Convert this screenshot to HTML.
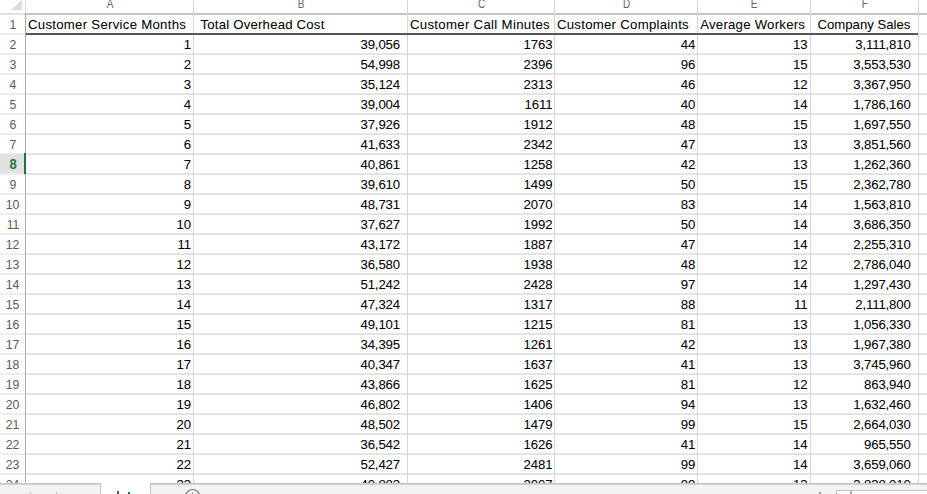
<!DOCTYPE html>
<html><head><meta charset="utf-8"><style>
*{margin:0;padding:0;box-sizing:border-box}
html,body{width:927px;height:494px;overflow:hidden;background:#fff}
body{position:relative;font-family:"Liberation Sans",sans-serif}
.l{position:absolute}
.t{position:absolute;white-space:nowrap;line-height:20px;height:20px;font-size:13.2px;color:#000;-webkit-text-stroke:0.05px #000}
.r{text-align:right}
.rh{position:absolute;white-space:nowrap;line-height:20px;height:20px;font-size:13.6px;color:#5a5a5a;text-align:center;width:25px;left:0}
.ch{position:absolute;white-space:nowrap;line-height:14px;font-size:12.5px;color:#666;text-align:center}
</style></head>
<body>
<svg class="l" style="left:0;top:0" width="25" height="14"><polygon points="11,10 22,10 22,0" fill="#dcdcdc"/></svg>
<div class="ch" style="left:26px;top:-2.9px;width:168px"><span style="display:inline-block;transform:scaleX(0.8)">A</span></div>
<div class="ch" style="left:194px;top:-2.9px;width:214px"><span style="display:inline-block;transform:scaleX(0.8)">B</span></div>
<div class="ch" style="left:408px;top:-2.9px;width:147px"><span style="display:inline-block;transform:scaleX(0.8)">C</span></div>
<div class="ch" style="left:555px;top:-2.9px;width:143px"><span style="display:inline-block;transform:scaleX(0.8)">D</span></div>
<div class="ch" style="left:698px;top:-2.9px;width:113px"><span style="display:inline-block;transform:scaleX(0.8)">E</span></div>
<div class="ch" style="left:811px;top:-2.9px;width:108px"><span style="display:inline-block;transform:scaleX(0.8)">F</span></div>
<div class="l" style="left:26px;top:53px;width:901px;height:1px;background:#e5e5e5"></div>
<div class="l" style="left:26px;top:54px;width:901px;height:1px;background:#e1e1e1"></div>
<div class="l" style="left:26px;top:73px;width:901px;height:1px;background:#e5e5e5"></div>
<div class="l" style="left:26px;top:74px;width:901px;height:1px;background:#e1e1e1"></div>
<div class="l" style="left:26px;top:93px;width:901px;height:1px;background:#e5e5e5"></div>
<div class="l" style="left:26px;top:94px;width:901px;height:1px;background:#e1e1e1"></div>
<div class="l" style="left:26px;top:113px;width:901px;height:1px;background:#e5e5e5"></div>
<div class="l" style="left:26px;top:114px;width:901px;height:1px;background:#e1e1e1"></div>
<div class="l" style="left:26px;top:133px;width:901px;height:1px;background:#e5e5e5"></div>
<div class="l" style="left:26px;top:134px;width:901px;height:1px;background:#e1e1e1"></div>
<div class="l" style="left:26px;top:153px;width:901px;height:1px;background:#e5e5e5"></div>
<div class="l" style="left:26px;top:154px;width:901px;height:1px;background:#e1e1e1"></div>
<div class="l" style="left:26px;top:173px;width:901px;height:1px;background:#e5e5e5"></div>
<div class="l" style="left:26px;top:174px;width:901px;height:1px;background:#e1e1e1"></div>
<div class="l" style="left:26px;top:193px;width:901px;height:1px;background:#e5e5e5"></div>
<div class="l" style="left:26px;top:194px;width:901px;height:1px;background:#e1e1e1"></div>
<div class="l" style="left:26px;top:213px;width:901px;height:1px;background:#e5e5e5"></div>
<div class="l" style="left:26px;top:214px;width:901px;height:1px;background:#e1e1e1"></div>
<div class="l" style="left:26px;top:233px;width:901px;height:1px;background:#e5e5e5"></div>
<div class="l" style="left:26px;top:234px;width:901px;height:1px;background:#e1e1e1"></div>
<div class="l" style="left:26px;top:253px;width:901px;height:1px;background:#e5e5e5"></div>
<div class="l" style="left:26px;top:254px;width:901px;height:1px;background:#e1e1e1"></div>
<div class="l" style="left:26px;top:273px;width:901px;height:1px;background:#e5e5e5"></div>
<div class="l" style="left:26px;top:274px;width:901px;height:1px;background:#e1e1e1"></div>
<div class="l" style="left:26px;top:293px;width:901px;height:1px;background:#e5e5e5"></div>
<div class="l" style="left:26px;top:294px;width:901px;height:1px;background:#e1e1e1"></div>
<div class="l" style="left:26px;top:313px;width:901px;height:1px;background:#e5e5e5"></div>
<div class="l" style="left:26px;top:314px;width:901px;height:1px;background:#e1e1e1"></div>
<div class="l" style="left:26px;top:333px;width:901px;height:1px;background:#e5e5e5"></div>
<div class="l" style="left:26px;top:334px;width:901px;height:1px;background:#e1e1e1"></div>
<div class="l" style="left:26px;top:353px;width:901px;height:1px;background:#e5e5e5"></div>
<div class="l" style="left:26px;top:354px;width:901px;height:1px;background:#e1e1e1"></div>
<div class="l" style="left:26px;top:373px;width:901px;height:1px;background:#e5e5e5"></div>
<div class="l" style="left:26px;top:374px;width:901px;height:1px;background:#e1e1e1"></div>
<div class="l" style="left:26px;top:393px;width:901px;height:1px;background:#e5e5e5"></div>
<div class="l" style="left:26px;top:394px;width:901px;height:1px;background:#e1e1e1"></div>
<div class="l" style="left:26px;top:413px;width:901px;height:1px;background:#e5e5e5"></div>
<div class="l" style="left:26px;top:414px;width:901px;height:1px;background:#e1e1e1"></div>
<div class="l" style="left:26px;top:433px;width:901px;height:1px;background:#e5e5e5"></div>
<div class="l" style="left:26px;top:434px;width:901px;height:1px;background:#e1e1e1"></div>
<div class="l" style="left:26px;top:453px;width:901px;height:1px;background:#e5e5e5"></div>
<div class="l" style="left:26px;top:454px;width:901px;height:1px;background:#e1e1e1"></div>
<div class="l" style="left:26px;top:473px;width:901px;height:1px;background:#e5e5e5"></div>
<div class="l" style="left:26px;top:474px;width:901px;height:1px;background:#e1e1e1"></div>
<div class="l" style="left:0px;top:33px;width:25px;height:1px;background:#efefef"></div>
<div class="l" style="left:0px;top:34px;width:25px;height:1px;background:#ebebeb"></div>
<div class="l" style="left:0px;top:53px;width:25px;height:1px;background:#efefef"></div>
<div class="l" style="left:0px;top:54px;width:25px;height:1px;background:#ebebeb"></div>
<div class="l" style="left:0px;top:73px;width:25px;height:1px;background:#efefef"></div>
<div class="l" style="left:0px;top:74px;width:25px;height:1px;background:#ebebeb"></div>
<div class="l" style="left:0px;top:93px;width:25px;height:1px;background:#efefef"></div>
<div class="l" style="left:0px;top:94px;width:25px;height:1px;background:#ebebeb"></div>
<div class="l" style="left:0px;top:113px;width:25px;height:1px;background:#efefef"></div>
<div class="l" style="left:0px;top:114px;width:25px;height:1px;background:#ebebeb"></div>
<div class="l" style="left:0px;top:133px;width:25px;height:1px;background:#efefef"></div>
<div class="l" style="left:0px;top:134px;width:25px;height:1px;background:#ebebeb"></div>
<div class="l" style="left:0px;top:153px;width:25px;height:1px;background:#efefef"></div>
<div class="l" style="left:0px;top:154px;width:25px;height:1px;background:#ebebeb"></div>
<div class="l" style="left:0px;top:173px;width:25px;height:1px;background:#efefef"></div>
<div class="l" style="left:0px;top:174px;width:25px;height:1px;background:#ebebeb"></div>
<div class="l" style="left:0px;top:193px;width:25px;height:1px;background:#efefef"></div>
<div class="l" style="left:0px;top:194px;width:25px;height:1px;background:#ebebeb"></div>
<div class="l" style="left:0px;top:213px;width:25px;height:1px;background:#efefef"></div>
<div class="l" style="left:0px;top:214px;width:25px;height:1px;background:#ebebeb"></div>
<div class="l" style="left:0px;top:233px;width:25px;height:1px;background:#efefef"></div>
<div class="l" style="left:0px;top:234px;width:25px;height:1px;background:#ebebeb"></div>
<div class="l" style="left:0px;top:253px;width:25px;height:1px;background:#efefef"></div>
<div class="l" style="left:0px;top:254px;width:25px;height:1px;background:#ebebeb"></div>
<div class="l" style="left:0px;top:273px;width:25px;height:1px;background:#efefef"></div>
<div class="l" style="left:0px;top:274px;width:25px;height:1px;background:#ebebeb"></div>
<div class="l" style="left:0px;top:293px;width:25px;height:1px;background:#efefef"></div>
<div class="l" style="left:0px;top:294px;width:25px;height:1px;background:#ebebeb"></div>
<div class="l" style="left:0px;top:313px;width:25px;height:1px;background:#efefef"></div>
<div class="l" style="left:0px;top:314px;width:25px;height:1px;background:#ebebeb"></div>
<div class="l" style="left:0px;top:333px;width:25px;height:1px;background:#efefef"></div>
<div class="l" style="left:0px;top:334px;width:25px;height:1px;background:#ebebeb"></div>
<div class="l" style="left:0px;top:353px;width:25px;height:1px;background:#efefef"></div>
<div class="l" style="left:0px;top:354px;width:25px;height:1px;background:#ebebeb"></div>
<div class="l" style="left:0px;top:373px;width:25px;height:1px;background:#efefef"></div>
<div class="l" style="left:0px;top:374px;width:25px;height:1px;background:#ebebeb"></div>
<div class="l" style="left:0px;top:393px;width:25px;height:1px;background:#efefef"></div>
<div class="l" style="left:0px;top:394px;width:25px;height:1px;background:#ebebeb"></div>
<div class="l" style="left:0px;top:413px;width:25px;height:1px;background:#efefef"></div>
<div class="l" style="left:0px;top:414px;width:25px;height:1px;background:#ebebeb"></div>
<div class="l" style="left:0px;top:433px;width:25px;height:1px;background:#efefef"></div>
<div class="l" style="left:0px;top:434px;width:25px;height:1px;background:#ebebeb"></div>
<div class="l" style="left:0px;top:453px;width:25px;height:1px;background:#efefef"></div>
<div class="l" style="left:0px;top:454px;width:25px;height:1px;background:#ebebeb"></div>
<div class="l" style="left:0px;top:473px;width:25px;height:1px;background:#efefef"></div>
<div class="l" style="left:0px;top:474px;width:25px;height:1px;background:#ebebeb"></div>
<div class="l" style="left:0px;top:13px;width:25px;height:1px;background:#e2e2e2"></div>
<div class="l" style="left:0px;top:14px;width:25px;height:1px;background:#dedede"></div>
<div class="l" style="left:26px;top:13px;width:901px;height:1px;background:#c8c8c8"></div>
<div class="l" style="left:26px;top:14px;width:901px;height:1px;background:#c2c2c2"></div>
<div class="l" style="left:193px;top:0;width:1px;height:483px;background:#d6d6d6"></div>
<div class="l" style="left:407px;top:0;width:1px;height:483px;background:#d6d6d6"></div>
<div class="l" style="left:554px;top:0;width:1px;height:483px;background:#d6d6d6"></div>
<div class="l" style="left:697px;top:0;width:1px;height:483px;background:#d6d6d6"></div>
<div class="l" style="left:810px;top:0;width:1px;height:483px;background:#d6d6d6"></div>
<div class="l" style="left:918px;top:0;width:1px;height:483px;background:#d6d6d6"></div>
<div class="l" style="left:25px;top:0;width:1px;height:13px;background:#dcdcdc"></div>
<div class="l" style="left:25px;top:13px;width:1px;height:470px;background:#a8a8a8"></div>
<div class="l" style="left:26px;top:33px;width:892px;height:1px;background:#5c5c5c"></div>
<div class="l" style="left:26px;top:34px;width:892px;height:1px;background:#525252"></div>
<div class="l" style="left:919px;top:33px;width:8px;height:1px;background:#e5e5e5"></div>
<div class="l" style="left:919px;top:34px;width:8px;height:1px;background:#e1e1e1"></div>
<div class="l" style="left:0;top:154px;width:24px;height:19px;background:#e1e1e1"></div>
<div class="l" style="left:24px;top:153px;width:2px;height:21px;background:#217346"></div>
<div class="t" style="left:28.0px;top:15.3px;letter-spacing:0.28px">Customer Service Months</div>
<div class="t" style="left:200.5px;top:15.3px;letter-spacing:0.2px">Total Overhead Cost</div>
<div class="t" style="left:409.9px;top:15.3px;letter-spacing:0.32px">Customer Call Minutes</div>
<div class="t" style="left:556.9000000000001px;top:15.3px;letter-spacing:0.28px">Customer Complaints</div>
<div class="t" style="left:700.2px;top:15.3px;letter-spacing:0.24px">Average Workers</div>
<div class="t" style="left:817.5px;top:15.3px;letter-spacing:-0.02px">Company Sales</div>
<div class="t r" style="left:-9.049999999999988px;width:200px;top:35.3px;letter-spacing:-0.15px">1</div>
<div class="t r" style="left:199.95000000000002px;width:200px;top:35.3px;letter-spacing:-0.15px">39,056</div>
<div class="t r" style="left:352.35px;width:200px;top:35.3px;letter-spacing:-0.15px">1763</div>
<div class="t r" style="left:495.15px;width:200px;top:35.3px;letter-spacing:-0.15px">44</div>
<div class="t r" style="left:607.35px;width:200px;top:35.3px;letter-spacing:-0.15px">13</div>
<div class="t r" style="left:710.65px;width:200px;top:35.3px;letter-spacing:-0.15px">3,111,810</div>
<div class="t r" style="left:-9.049999999999988px;width:200px;top:55.3px;letter-spacing:-0.15px">2</div>
<div class="t r" style="left:199.95000000000002px;width:200px;top:55.3px;letter-spacing:-0.15px">54,998</div>
<div class="t r" style="left:352.35px;width:200px;top:55.3px;letter-spacing:-0.15px">2396</div>
<div class="t r" style="left:495.15px;width:200px;top:55.3px;letter-spacing:-0.15px">96</div>
<div class="t r" style="left:607.35px;width:200px;top:55.3px;letter-spacing:-0.15px">15</div>
<div class="t r" style="left:710.65px;width:200px;top:55.3px;letter-spacing:-0.15px">3,553,530</div>
<div class="t r" style="left:-9.049999999999988px;width:200px;top:75.3px;letter-spacing:-0.15px">3</div>
<div class="t r" style="left:199.95000000000002px;width:200px;top:75.3px;letter-spacing:-0.15px">35,124</div>
<div class="t r" style="left:352.35px;width:200px;top:75.3px;letter-spacing:-0.15px">2313</div>
<div class="t r" style="left:495.15px;width:200px;top:75.3px;letter-spacing:-0.15px">46</div>
<div class="t r" style="left:607.35px;width:200px;top:75.3px;letter-spacing:-0.15px">12</div>
<div class="t r" style="left:710.65px;width:200px;top:75.3px;letter-spacing:-0.15px">3,367,950</div>
<div class="t r" style="left:-9.049999999999988px;width:200px;top:95.3px;letter-spacing:-0.15px">4</div>
<div class="t r" style="left:199.95000000000002px;width:200px;top:95.3px;letter-spacing:-0.15px">39,004</div>
<div class="t r" style="left:352.35px;width:200px;top:95.3px;letter-spacing:-0.15px">1611</div>
<div class="t r" style="left:495.15px;width:200px;top:95.3px;letter-spacing:-0.15px">40</div>
<div class="t r" style="left:607.35px;width:200px;top:95.3px;letter-spacing:-0.15px">14</div>
<div class="t r" style="left:710.65px;width:200px;top:95.3px;letter-spacing:-0.15px">1,786,160</div>
<div class="t r" style="left:-9.049999999999988px;width:200px;top:115.3px;letter-spacing:-0.15px">5</div>
<div class="t r" style="left:199.95000000000002px;width:200px;top:115.3px;letter-spacing:-0.15px">37,926</div>
<div class="t r" style="left:352.35px;width:200px;top:115.3px;letter-spacing:-0.15px">1912</div>
<div class="t r" style="left:495.15px;width:200px;top:115.3px;letter-spacing:-0.15px">48</div>
<div class="t r" style="left:607.35px;width:200px;top:115.3px;letter-spacing:-0.15px">15</div>
<div class="t r" style="left:710.65px;width:200px;top:115.3px;letter-spacing:-0.15px">1,697,550</div>
<div class="t r" style="left:-9.049999999999988px;width:200px;top:135.3px;letter-spacing:-0.15px">6</div>
<div class="t r" style="left:199.95000000000002px;width:200px;top:135.3px;letter-spacing:-0.15px">41,633</div>
<div class="t r" style="left:352.35px;width:200px;top:135.3px;letter-spacing:-0.15px">2342</div>
<div class="t r" style="left:495.15px;width:200px;top:135.3px;letter-spacing:-0.15px">47</div>
<div class="t r" style="left:607.35px;width:200px;top:135.3px;letter-spacing:-0.15px">13</div>
<div class="t r" style="left:710.65px;width:200px;top:135.3px;letter-spacing:-0.15px">3,851,560</div>
<div class="t r" style="left:-9.049999999999988px;width:200px;top:155.3px;letter-spacing:-0.15px">7</div>
<div class="t r" style="left:199.95000000000002px;width:200px;top:155.3px;letter-spacing:-0.15px">40,861</div>
<div class="t r" style="left:352.35px;width:200px;top:155.3px;letter-spacing:-0.15px">1258</div>
<div class="t r" style="left:495.15px;width:200px;top:155.3px;letter-spacing:-0.15px">42</div>
<div class="t r" style="left:607.35px;width:200px;top:155.3px;letter-spacing:-0.15px">13</div>
<div class="t r" style="left:710.65px;width:200px;top:155.3px;letter-spacing:-0.15px">1,262,360</div>
<div class="t r" style="left:-9.049999999999988px;width:200px;top:175.3px;letter-spacing:-0.15px">8</div>
<div class="t r" style="left:199.95000000000002px;width:200px;top:175.3px;letter-spacing:-0.15px">39,610</div>
<div class="t r" style="left:352.35px;width:200px;top:175.3px;letter-spacing:-0.15px">1499</div>
<div class="t r" style="left:495.15px;width:200px;top:175.3px;letter-spacing:-0.15px">50</div>
<div class="t r" style="left:607.35px;width:200px;top:175.3px;letter-spacing:-0.15px">15</div>
<div class="t r" style="left:710.65px;width:200px;top:175.3px;letter-spacing:-0.15px">2,362,780</div>
<div class="t r" style="left:-9.049999999999988px;width:200px;top:195.3px;letter-spacing:-0.15px">9</div>
<div class="t r" style="left:199.95000000000002px;width:200px;top:195.3px;letter-spacing:-0.15px">48,731</div>
<div class="t r" style="left:352.35px;width:200px;top:195.3px;letter-spacing:-0.15px">2070</div>
<div class="t r" style="left:495.15px;width:200px;top:195.3px;letter-spacing:-0.15px">83</div>
<div class="t r" style="left:607.35px;width:200px;top:195.3px;letter-spacing:-0.15px">14</div>
<div class="t r" style="left:710.65px;width:200px;top:195.3px;letter-spacing:-0.15px">1,563,810</div>
<div class="t r" style="left:-9.049999999999988px;width:200px;top:215.3px;letter-spacing:-0.15px">10</div>
<div class="t r" style="left:199.95000000000002px;width:200px;top:215.3px;letter-spacing:-0.15px">37,627</div>
<div class="t r" style="left:352.35px;width:200px;top:215.3px;letter-spacing:-0.15px">1992</div>
<div class="t r" style="left:495.15px;width:200px;top:215.3px;letter-spacing:-0.15px">50</div>
<div class="t r" style="left:607.35px;width:200px;top:215.3px;letter-spacing:-0.15px">14</div>
<div class="t r" style="left:710.65px;width:200px;top:215.3px;letter-spacing:-0.15px">3,686,350</div>
<div class="t r" style="left:-9.049999999999988px;width:200px;top:235.3px;letter-spacing:-0.15px">11</div>
<div class="t r" style="left:199.95000000000002px;width:200px;top:235.3px;letter-spacing:-0.15px">43,172</div>
<div class="t r" style="left:352.35px;width:200px;top:235.3px;letter-spacing:-0.15px">1887</div>
<div class="t r" style="left:495.15px;width:200px;top:235.3px;letter-spacing:-0.15px">47</div>
<div class="t r" style="left:607.35px;width:200px;top:235.3px;letter-spacing:-0.15px">14</div>
<div class="t r" style="left:710.65px;width:200px;top:235.3px;letter-spacing:-0.15px">2,255,310</div>
<div class="t r" style="left:-9.049999999999988px;width:200px;top:255.3px;letter-spacing:-0.15px">12</div>
<div class="t r" style="left:199.95000000000002px;width:200px;top:255.3px;letter-spacing:-0.15px">36,580</div>
<div class="t r" style="left:352.35px;width:200px;top:255.3px;letter-spacing:-0.15px">1938</div>
<div class="t r" style="left:495.15px;width:200px;top:255.3px;letter-spacing:-0.15px">48</div>
<div class="t r" style="left:607.35px;width:200px;top:255.3px;letter-spacing:-0.15px">12</div>
<div class="t r" style="left:710.65px;width:200px;top:255.3px;letter-spacing:-0.15px">2,786,040</div>
<div class="t r" style="left:-9.049999999999988px;width:200px;top:275.3px;letter-spacing:-0.15px">13</div>
<div class="t r" style="left:199.95000000000002px;width:200px;top:275.3px;letter-spacing:-0.15px">51,242</div>
<div class="t r" style="left:352.35px;width:200px;top:275.3px;letter-spacing:-0.15px">2428</div>
<div class="t r" style="left:495.15px;width:200px;top:275.3px;letter-spacing:-0.15px">97</div>
<div class="t r" style="left:607.35px;width:200px;top:275.3px;letter-spacing:-0.15px">14</div>
<div class="t r" style="left:710.65px;width:200px;top:275.3px;letter-spacing:-0.15px">1,297,430</div>
<div class="t r" style="left:-9.049999999999988px;width:200px;top:295.3px;letter-spacing:-0.15px">14</div>
<div class="t r" style="left:199.95000000000002px;width:200px;top:295.3px;letter-spacing:-0.15px">47,324</div>
<div class="t r" style="left:352.35px;width:200px;top:295.3px;letter-spacing:-0.15px">1317</div>
<div class="t r" style="left:495.15px;width:200px;top:295.3px;letter-spacing:-0.15px">88</div>
<div class="t r" style="left:607.35px;width:200px;top:295.3px;letter-spacing:-0.15px">11</div>
<div class="t r" style="left:710.65px;width:200px;top:295.3px;letter-spacing:-0.15px">2,111,800</div>
<div class="t r" style="left:-9.049999999999988px;width:200px;top:315.3px;letter-spacing:-0.15px">15</div>
<div class="t r" style="left:199.95000000000002px;width:200px;top:315.3px;letter-spacing:-0.15px">49,101</div>
<div class="t r" style="left:352.35px;width:200px;top:315.3px;letter-spacing:-0.15px">1215</div>
<div class="t r" style="left:495.15px;width:200px;top:315.3px;letter-spacing:-0.15px">81</div>
<div class="t r" style="left:607.35px;width:200px;top:315.3px;letter-spacing:-0.15px">13</div>
<div class="t r" style="left:710.65px;width:200px;top:315.3px;letter-spacing:-0.15px">1,056,330</div>
<div class="t r" style="left:-9.049999999999988px;width:200px;top:335.3px;letter-spacing:-0.15px">16</div>
<div class="t r" style="left:199.95000000000002px;width:200px;top:335.3px;letter-spacing:-0.15px">34,395</div>
<div class="t r" style="left:352.35px;width:200px;top:335.3px;letter-spacing:-0.15px">1261</div>
<div class="t r" style="left:495.15px;width:200px;top:335.3px;letter-spacing:-0.15px">42</div>
<div class="t r" style="left:607.35px;width:200px;top:335.3px;letter-spacing:-0.15px">13</div>
<div class="t r" style="left:710.65px;width:200px;top:335.3px;letter-spacing:-0.15px">1,967,380</div>
<div class="t r" style="left:-9.049999999999988px;width:200px;top:355.3px;letter-spacing:-0.15px">17</div>
<div class="t r" style="left:199.95000000000002px;width:200px;top:355.3px;letter-spacing:-0.15px">40,347</div>
<div class="t r" style="left:352.35px;width:200px;top:355.3px;letter-spacing:-0.15px">1637</div>
<div class="t r" style="left:495.15px;width:200px;top:355.3px;letter-spacing:-0.15px">41</div>
<div class="t r" style="left:607.35px;width:200px;top:355.3px;letter-spacing:-0.15px">13</div>
<div class="t r" style="left:710.65px;width:200px;top:355.3px;letter-spacing:-0.15px">3,745,960</div>
<div class="t r" style="left:-9.049999999999988px;width:200px;top:375.3px;letter-spacing:-0.15px">18</div>
<div class="t r" style="left:199.95000000000002px;width:200px;top:375.3px;letter-spacing:-0.15px">43,866</div>
<div class="t r" style="left:352.35px;width:200px;top:375.3px;letter-spacing:-0.15px">1625</div>
<div class="t r" style="left:495.15px;width:200px;top:375.3px;letter-spacing:-0.15px">81</div>
<div class="t r" style="left:607.35px;width:200px;top:375.3px;letter-spacing:-0.15px">12</div>
<div class="t r" style="left:710.65px;width:200px;top:375.3px;letter-spacing:-0.15px">863,940</div>
<div class="t r" style="left:-9.049999999999988px;width:200px;top:395.3px;letter-spacing:-0.15px">19</div>
<div class="t r" style="left:199.95000000000002px;width:200px;top:395.3px;letter-spacing:-0.15px">46,802</div>
<div class="t r" style="left:352.35px;width:200px;top:395.3px;letter-spacing:-0.15px">1406</div>
<div class="t r" style="left:495.15px;width:200px;top:395.3px;letter-spacing:-0.15px">94</div>
<div class="t r" style="left:607.35px;width:200px;top:395.3px;letter-spacing:-0.15px">13</div>
<div class="t r" style="left:710.65px;width:200px;top:395.3px;letter-spacing:-0.15px">1,632,460</div>
<div class="t r" style="left:-9.049999999999988px;width:200px;top:415.3px;letter-spacing:-0.15px">20</div>
<div class="t r" style="left:199.95000000000002px;width:200px;top:415.3px;letter-spacing:-0.15px">48,502</div>
<div class="t r" style="left:352.35px;width:200px;top:415.3px;letter-spacing:-0.15px">1479</div>
<div class="t r" style="left:495.15px;width:200px;top:415.3px;letter-spacing:-0.15px">99</div>
<div class="t r" style="left:607.35px;width:200px;top:415.3px;letter-spacing:-0.15px">15</div>
<div class="t r" style="left:710.65px;width:200px;top:415.3px;letter-spacing:-0.15px">2,664,030</div>
<div class="t r" style="left:-9.049999999999988px;width:200px;top:435.3px;letter-spacing:-0.15px">21</div>
<div class="t r" style="left:199.95000000000002px;width:200px;top:435.3px;letter-spacing:-0.15px">36,542</div>
<div class="t r" style="left:352.35px;width:200px;top:435.3px;letter-spacing:-0.15px">1626</div>
<div class="t r" style="left:495.15px;width:200px;top:435.3px;letter-spacing:-0.15px">41</div>
<div class="t r" style="left:607.35px;width:200px;top:435.3px;letter-spacing:-0.15px">14</div>
<div class="t r" style="left:710.65px;width:200px;top:435.3px;letter-spacing:-0.15px">965,550</div>
<div class="t r" style="left:-9.049999999999988px;width:200px;top:455.3px;letter-spacing:-0.15px">22</div>
<div class="t r" style="left:199.95000000000002px;width:200px;top:455.3px;letter-spacing:-0.15px">52,427</div>
<div class="t r" style="left:352.35px;width:200px;top:455.3px;letter-spacing:-0.15px">2481</div>
<div class="t r" style="left:495.15px;width:200px;top:455.3px;letter-spacing:-0.15px">99</div>
<div class="t r" style="left:607.35px;width:200px;top:455.3px;letter-spacing:-0.15px">14</div>
<div class="t r" style="left:710.65px;width:200px;top:455.3px;letter-spacing:-0.15px">3,659,060</div>
<div class="t r" style="left:-9.049999999999988px;width:200px;top:475.3px;letter-spacing:-0.15px">23</div>
<div class="t r" style="left:199.95000000000002px;width:200px;top:475.3px;letter-spacing:-0.15px">40,882</div>
<div class="t r" style="left:352.35px;width:200px;top:475.3px;letter-spacing:-0.15px">2007</div>
<div class="t r" style="left:495.15px;width:200px;top:475.3px;letter-spacing:-0.15px">99</div>
<div class="t r" style="left:607.35px;width:200px;top:475.3px;letter-spacing:-0.15px">13</div>
<div class="t r" style="left:710.65px;width:200px;top:475.3px;letter-spacing:-0.15px">3,838,010</div>
<div class="rh" style="top:14.8px;left:0.5px"><span style="display:inline-block;transform:scaleX(0.9)">1</span></div>
<div class="rh" style="top:34.8px;left:0.5px"><span style="display:inline-block;transform:scaleX(0.9)">2</span></div>
<div class="rh" style="top:54.8px;left:0.5px"><span style="display:inline-block;transform:scaleX(0.9)">3</span></div>
<div class="rh" style="top:74.8px;left:0.5px"><span style="display:inline-block;transform:scaleX(0.9)">4</span></div>
<div class="rh" style="top:94.8px;left:0.5px"><span style="display:inline-block;transform:scaleX(0.9)">5</span></div>
<div class="rh" style="top:114.8px;left:0.5px"><span style="display:inline-block;transform:scaleX(0.9)">6</span></div>
<div class="rh" style="top:134.8px;left:0.5px"><span style="display:inline-block;transform:scaleX(0.9)">7</span></div>
<div class="rh" style="top:154.8px;left:0.5px;color:#217346;font-weight:bold;font-size:14.5px;margin-top:-0.8px"><span style="display:inline-block;transform:scaleX(0.9)">8</span></div>
<div class="rh" style="top:174.8px;left:0.5px"><span style="display:inline-block;transform:scaleX(0.9)">9</span></div>
<div class="rh" style="top:194.8px;left:0.5px"><span style="display:inline-block;transform:scaleX(0.9)">10</span></div>
<div class="rh" style="top:214.8px;left:0.5px"><span style="display:inline-block;transform:scaleX(0.9)">11</span></div>
<div class="rh" style="top:234.8px;left:0.5px"><span style="display:inline-block;transform:scaleX(0.9)">12</span></div>
<div class="rh" style="top:254.8px;left:0.5px"><span style="display:inline-block;transform:scaleX(0.9)">13</span></div>
<div class="rh" style="top:274.8px;left:0.5px"><span style="display:inline-block;transform:scaleX(0.9)">14</span></div>
<div class="rh" style="top:294.8px;left:0.5px"><span style="display:inline-block;transform:scaleX(0.9)">15</span></div>
<div class="rh" style="top:314.8px;left:0.5px"><span style="display:inline-block;transform:scaleX(0.9)">16</span></div>
<div class="rh" style="top:334.8px;left:0.5px"><span style="display:inline-block;transform:scaleX(0.9)">17</span></div>
<div class="rh" style="top:354.8px;left:0.5px"><span style="display:inline-block;transform:scaleX(0.9)">18</span></div>
<div class="rh" style="top:374.8px;left:0.5px"><span style="display:inline-block;transform:scaleX(0.9)">19</span></div>
<div class="rh" style="top:394.8px;left:0.5px"><span style="display:inline-block;transform:scaleX(0.9)">20</span></div>
<div class="rh" style="top:414.8px;left:0.5px"><span style="display:inline-block;transform:scaleX(0.9)">21</span></div>
<div class="rh" style="top:434.8px;left:0.5px"><span style="display:inline-block;transform:scaleX(0.9)">22</span></div>
<div class="rh" style="top:454.8px;left:0.5px"><span style="display:inline-block;transform:scaleX(0.9)">23</span></div>
<div class="rh" style="top:474.8px;left:0.5px"><span style="display:inline-block;transform:scaleX(0.9)">24</span></div>
<div class="l" style="left:0;top:483px;width:101px;height:11px;background:#f3f3f3;border-top:1px solid #c6c6c6;border-right:1px solid #c6c6c6"></div>
<div class="l" style="left:101px;top:483px;width:49px;height:11px;background:#fff"></div>
<div class="l" style="left:150px;top:483px;width:777px;height:11px;background:#f3f3f3;border-top:1px solid #c6c6c6;border-left:1px solid #c6c6c6"></div>
<div class="l" style="left:117px;top:491px;width:2px;height:3px;background:#217346"></div>
<div class="l" style="left:128px;top:492px;width:2px;height:2px;background:#217346"></div>
<svg class="l" style="left:183.6px;top:488px" width="18" height="6"><circle cx="8.6" cy="8.5" r="7" fill="none" stroke="#777" stroke-width="1.2"/><line x1="8.6" y1="4.5" x2="8.6" y2="7" stroke="#777" stroke-width="1.2"/></svg>
<div class="l" style="left:30px;top:492px;width:1px;height:2px;background:#c4c4c4"></div>
<div class="l" style="left:56px;top:492px;width:1px;height:2px;background:#c4c4c4"></div>
<div class="l" style="left:819px;top:492px;width:2px;height:2px;background:#a0a0a0"></div>
<div class="l" style="left:836px;top:490px;width:91px;height:4px;background:#fff;border-top:1px solid #c6c6c6;border-left:1px solid #c6c6c6"></div>
<div class="l" style="left:850px;top:491px;width:2px;height:3px;background:#a8a8a8"></div>
<div class="l" style="left:0;top:484px;width:100px;height:1px;background:#d0d0d0"></div>
<div class="l" style="left:151px;top:484px;width:776px;height:1px;background:#d0d0d0"></div>
</body></html>
